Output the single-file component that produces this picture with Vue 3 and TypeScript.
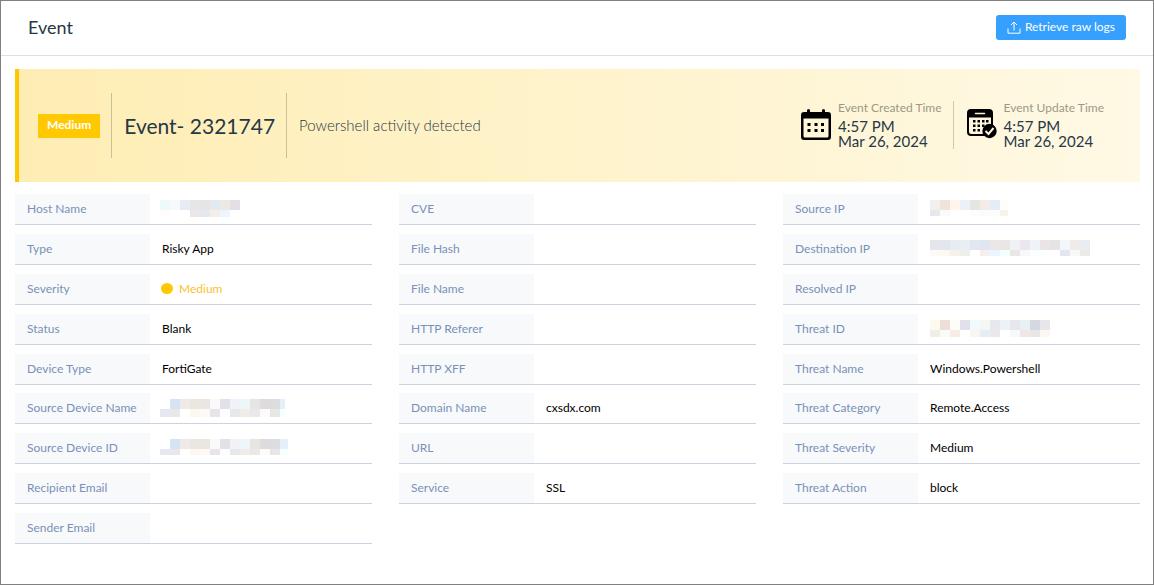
<script setup lang="ts">
interface Mosaic {
  width: number
  split: number
  height: number
  top: string[]
  bottom: string[]
}

interface Field {
  label: string
  value?: string
  severity?: boolean
  mosaic?: Mosaic
}

const hostName: Mosaic = {
  width: 80, split: 10, height: 17,
  top: ['#eef9fc', '#f7f8f9', '#e6ebf4', '#e5e7e7', '#e7e5e4', '#e2e9f2', '#ece8e5', '#e2e0e5'],
  bottom: ['#fefdfb', '', '', '#ebe7e9', '#e4e7ef', '#f3eee8', '#edf5fe', ''],
}

const deviceTop = ['', '#d5e3f4', '#efeae8', '#ebe7e0', '#eae6e4', '#f9f9fa', '#e3e1e7', '#f1f2f5', '#edf7f9', '#e8e4e1', '#dddbdf', '#dcdddf', '#e6eef9']
const deviceBottom = ['#e5e8f1', '#e8e8e8', '', '#fcf8f0', '#fef9f5', '#e7e5ea', '#fdfeff', '#e7e8ea', '#f2ece8', '#e8e9eb', '#fefcfb', '#e6e7e7', '#f5fffe']

const deviceName: Mosaic = { width: 125, split: 10, height: 18, top: deviceTop, bottom: deviceBottom }
const deviceId: Mosaic = { width: 128, split: 10, height: 16, top: deviceTop, bottom: deviceBottom }

const sourceIp: Mosaic = {
  width: 78, split: 10, height: 16,
  top: ['#f2efed', '#f1e3d8', '#fff5ea', '#ebf1f7', '#e6e6e1', '#f2ece8', '#e5ecf7', '#fdfdfa'],
  bottom: ['#e6e8ee', '#fafaf9', '', '', '#fefdfc', '#f8fcfe', '#fdfcf9', '#f7f3ec'],
}

const destinationIp: Mosaic = {
  width: 160, split: 10, height: 16,
  top: ['#e5e6eb', '#e3e6ee', '#e6ecf1', '#e8eef1', '#e1e7f0', '#e0e6f0', '#ebe7e7', '#e9e7e3', '#eef2f4', '#e9e6ed', '#eef3f6', '#eae5e4', '#e4e4e7', '#f2f8fa', '#f0eae8', '#e7edf3'],
  bottom: ['#fcfaf5', '#fcf8f4', '#f7f1ed', '#f0eee9', '', '#f5f0ec', '#eaf5ff', '#f1ffff', '#eae6e6', '#f8f8fa', '#fbfeff', '#fbffff', '', '#e5e6ed', '#f7f8fa', '#eee9e6'],
}

const threatId: Mosaic = {
  width: 120, split: 10, height: 17,
  top: ['#fef9ef', '#ecdfd8', '#fdfdf7', '#e1e1eb', '#f1f9fc', '#f5f7f5', '#e7e7ed', '#edf2f6', '#e8e6ed', '#e9f0f3', '#d5d8e1', '#e7e7ea'],
  bottom: ['#f1eeea', '#fafaf9', '#f8ede6', '', '#f7f6f1', '#e6edf4', '#e9e9e9', '', '#f7f8f8', '#eee7e5', '#eae6e8', '#fcf7f0'],
}

const columns: Field[][] = [
  [
    { label: 'Host Name', mosaic: hostName },
    { label: 'Type', value: 'Risky App' },
    { label: 'Severity', value: 'Medium', severity: true },
    { label: 'Status', value: 'Blank' },
    { label: 'Device Type', value: 'FortiGate' },
    { label: 'Source Device Name', mosaic: deviceName },
    { label: 'Source Device ID', mosaic: deviceId },
    { label: 'Recipient Email' },
    { label: 'Sender Email' },
  ],
  [
    { label: 'CVE' },
    { label: 'File Hash' },
    { label: 'File Name' },
    { label: 'HTTP Referer' },
    { label: 'HTTP XFF' },
    { label: 'Domain Name', value: 'cxsdx.com' },
    { label: 'URL' },
    { label: 'Service', value: 'SSL' },
  ],
  [
    { label: 'Source IP', mosaic: sourceIp },
    { label: 'Destination IP', mosaic: destinationIp },
    { label: 'Resolved IP' },
    { label: 'Threat ID', mosaic: threatId },
    { label: 'Threat Name', value: 'Windows.Powershell' },
    { label: 'Threat Category', value: 'Remote.Access' },
    { label: 'Threat Severity', value: 'Medium' },
    { label: 'Threat Action', value: 'block' },
  ],
]
</script>

<template>
  <main class="page">
    <header class="topbar">
      <h1 class="title">Event</h1>
      <button type="button" class="retrieve">
        <svg class="retrieve-icon" width="14" height="13" viewBox="0 0 14 13" fill="none" stroke="currentColor" aria-hidden="true">
          <path d="M1 7.5V12.2H13V7.5M7 9.5V1.2M4 4L7 1L10 4" />
        </svg>
        <span>Retrieve raw logs</span>
      </button>
    </header>

    <section class="banner">
      <span class="badge">Medium</span>
      <h2 class="event-id">Event- 2321747</h2>
      <p class="summary">Powershell activity detected</p>
      <div class="times">
        <div class="time">
          <svg width="30" height="31" viewBox="0 0 30 31" aria-hidden="true">
            <path fill="#000" fill-rule="evenodd" d="M3 3H6V1.500Q6 0 7.500 0Q9 0 9 1.500V3H21V1.500Q21 0 22.500 0Q24 0 24 1.500V3H27Q30 3 30 6V28Q30 31 27 31H3Q0 31 0 28V6Q0 3 3 3ZM2.500 9.500V27Q2.500 28.500 4 28.500H26Q27.500 28.500 27.500 27V9.500Z" />
            <path fill="#000" d="M6.500 14h3v3h-3zM13.500 14h3v3h-3zM20 14h3v3h-3zM6.500 20h3v3h-3zM13.500 20h3v3h-3zM20 20h3v3h-3z" />
          </svg>
          <div>
            <div class="time-label">Event Created Time</div>
            <div class="time-value">4:57 PM<br />Mar 26, 2024</div>
          </div>
        </div>
        <div class="time">
          <svg width="30" height="31" viewBox="0 0 30 31" aria-hidden="true">
            <path fill="#000" fill-rule="evenodd" d="M4 0H22Q26 0 26 4V23Q26 27 22 27H4Q0 27 0 23V4Q0 0 4 0ZM2 8.500V22.500Q2 25 4.500 25H21.500Q24 25 24 22.500V8.500Z" />
            <path stroke="#fff7d9" stroke-width="1.500" stroke-linecap="round" d="M8.500 4.500h9" />
            <path fill="#000" d="M6 11h2.500v2.500H6zM10.500 11H13v2.500h-2.500zM15 11h2.500v2.500H15zM19 11h2.500v2.500H19zM6 15.500h2.500V18H6zM10.500 15.500H13V18h-2.500zM15 15.500h2.500V18H15zM6 20h2.500v2.500H6zM10.500 20H13v2.500h-2.500z" />
            <circle cx="22.500" cy="22" r="7.200" fill="#000" />
            <path fill="none" stroke="#fff7d9" stroke-width="2" d="M18.500 22L21.500 25L26.500 19" />
          </svg>
          <div>
            <div class="time-label">Event Update Time</div>
            <div class="time-value">4:57 PM<br />Mar 26, 2024</div>
          </div>
        </div>
      </div>
    </section>

    <section class="details">
      <dl v-for="(fields, index) in columns" :key="index" class="column">
        <div v-for="field in fields" :key="field.label" class="field">
          <dt>{{ field.label }}</dt>
          <dd :class="{ severity: field.severity, redacted: field.mosaic }">
            <svg
              v-if="field.mosaic"
              :width="field.mosaic.width"
              :height="field.mosaic.height"
              shape-rendering="crispEdges"
              aria-hidden="true"
            >
              <template v-for="(color, i) in field.mosaic.top" :key="i">
                <rect v-if="color" :x="i * 10" y="0" width="10" :height="field.mosaic.split" :fill="color" />
              </template>
              <template v-for="(color, i) in field.mosaic.bottom" :key="i">
                <rect v-if="color" :x="i * 10" :y="field.mosaic.split" width="10" :height="field.mosaic.height - field.mosaic.split" :fill="color" />
              </template>
            </svg>
            <template v-else>{{ field.value }}</template>
          </dd>
        </div>
      </dl>
    </section>
  </main>
</template>

<style>
body {
  margin: 0;
  background: #fff;
}
</style>

<style scoped>
.page {
  box-sizing: border-box;
  min-height: 100vh;
  border: 1px solid #808080;
  background: #fff;
  font-family: Lato, "Liberation Sans", sans-serif;
  font-size: 12px;
  color: #000;
}

.topbar {
  display: flex;
  align-items: center;
  justify-content: space-between;
  box-sizing: border-box;
  height: 55px;
  padding: 0 27px 2px;
  border-bottom: 1px solid #dddfe8;
}

.title {
  margin: 0;
  font-size: 18px;
  line-height: 24px;
  font-weight: 400;
  color: #263746;
}

.retrieve {
  display: flex;
  align-items: center;
  gap: 4px;
  height: 25px;
  padding: 0 11px;
  border: 0;
  border-radius: 3px;
  background: #36a0ff;
  color: #fff;
  font: 400 12px/16px Lato, "Liberation Sans", sans-serif;
  cursor: pointer;
}

.banner {
  display: flex;
  align-items: center;
  box-sizing: border-box;
  min-height: 113px;
  margin: 13px 13px 12px 14px;
  padding-left: 19px;
  border-left: 4px solid #fec700;
  background: linear-gradient(90deg, #feedb3, #fff9e5);
  color: #263746;
}

.badge {
  padding: 3px 9px 5px;
  background: #ffc800;
  color: #fff;
  font-size: 12px;
  line-height: 16px;
  font-weight: 700;
}

.event-id {
  margin: 0 0 0 11px;
  padding: 0 11px 0 12px;
  border: solid #c9bf99;
  border-width: 0 1px;
  font-size: 21px;
  line-height: 65px;
  font-weight: 400;
}

.summary {
  margin: 0 0 0 12px;
  padding-bottom: 2px;
  font-size: 15px;
  line-height: 20px;
  font-weight: 300;
}

.times {
  display: flex;
  margin-left: auto;
  padding: 0 36px 2px 0;
}

.time {
  display: flex;
  align-items: center;
  gap: 7px;
}

.time + .time {
  margin-left: 11px;
  padding-left: 13px;
  border-left: 1px solid #cfc8ac;
}

.time-label {
  margin-bottom: 4px;
  color: #9c9885;
  line-height: 14px;
}

.time-value {
  font-size: 15px;
  line-height: 15px;
}

.details {
  display: grid;
  grid-template-columns: repeat(3, 1fr);
  gap: 27px;
  padding: 0 13px 0 14px;
}

.column {
  display: grid;
  grid-template-rows: repeat(9, 31px);
  align-content: space-between;
  min-height: 350px;
  margin: 0;
}

.field {
  display: flex;
  border-bottom: 1px solid #cbd3e0;
  line-height: 30px;
}

dt {
  box-sizing: border-box;
  width: 135px;
  padding-left: 12px;
  background: #f8f9fb;
  color: #7991b8;
}

dd {
  display: flex;
  align-items: center;
  margin: 0;
  padding-left: 12px;
}

.redacted {
  align-items: flex-start;
  padding-top: 6px;
}

.column:first-child .redacted {
  padding-left: 10px;
}

.severity {
  gap: 6px;
  padding-left: 11px;
  color: #fdc02f;
}

.severity::before {
  content: "";
  width: 12px;
  height: 11px;
  border-radius: 50%;
  background: #ffc800;
}
</style>
